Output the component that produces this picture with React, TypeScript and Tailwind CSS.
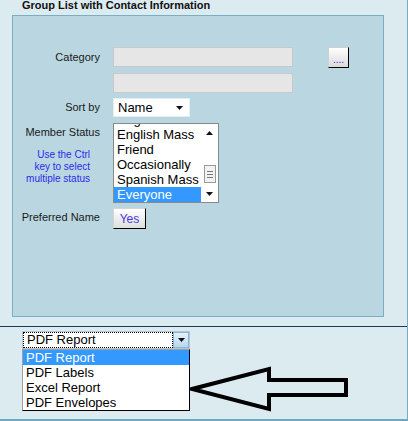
import React from "react";

const FONT = "font-['Liberation_Sans',Arial,sans-serif]";

const STATUS = ["Regular", "English Mass", "Friend", "Occasionally", "Spanish Mass", "Everyone"];
const REPORTS = ["PDF Report", "PDF Labels", "Excel Report", "PDF Envelopes"];

function Tri({ down = true, cls = "" }: { down?: boolean; cls?: string }) {
  return (
    <svg width="7" height="4" viewBox="0 0 7 4" className={cls}>
      {down ? <polygon points="0,0 7,0 3.5,4" fill="#111" /> : <polygon points="0,4 7,4 3.5,0" fill="#111" />}
    </svg>
  );
}

function Label({ children }: { children: React.ReactNode }) {
  return <div className="w-[87px] shrink-0 text-right text-[11px] leading-[13px] text-[#1a1a1a]">{children}</div>;
}

export default function App() {
  return (
    <div className={`${FONT} w-[408px] h-[421px] overflow-hidden flex flex-col bg-[#dcebf0] border-r border-r-[#76adc2] border-b-2 border-b-[#6ea8bd]`}>
      <div className="h-[15px] shrink-0 pl-[22px] text-[11px] leading-[11px] font-bold text-[#111]">
        Group List with Contact Information
      </div>

      {/* criteria panel */}
      <div className="ml-[12px] w-[372px] h-[302px] shrink-0 bg-[#bad6e0] border border-[#78afc4] pt-[31px]">
        <div className="flex items-start">
          <div className="pt-[4px]"><Label>Category</Label></div>
          <div className="ml-[13px] w-[180px] h-[20px] bg-[#e6e6e6] border border-[#c9c9c9]" />
          <button className="ml-[35px] w-[21px] h-[21px] flex items-end justify-center pb-[2px] bg-gradient-to-b from-white to-[#dadada] border border-[#d0d0d0] border-r-black border-b-black text-[10px] leading-[10px] text-[#2a2ae0]">
            ....
          </button>
        </div>

        <div className="ml-[100px] mt-[5px] w-[180px] h-[20px] bg-[#e6e6e6] border border-[#c9c9c9]" />

        <div className="flex items-center mt-[5px]">
          <Label>Sort by</Label>
          <div className="ml-[13px] w-[77px] h-[19px] bg-white border border-[#e4eef2] flex items-center pl-[4px] pr-[6px] text-[13px] leading-[15px] text-black">
            <span className="flex-1">Name</span>
            <Tri />
          </div>
        </div>

        <div className="flex items-start mt-[6px]">
          <div className="w-[87px] shrink-0 flex flex-col items-end pt-[3px]">
            <Label>Member Status</Label>
            <div className="mt-[10px] pr-[10px] text-right text-[10px] leading-[12px] text-[#2b2bef]">
              Use the Ctrl
              <br />
              key to select
              <br />
              multiple status
            </div>
          </div>
          <div className="ml-[13px] w-[106px] h-[80px] bg-white border border-[#8a8a8a] flex">
            <div className="flex-1 overflow-hidden flex flex-col justify-end text-[13px] leading-[15px] text-black">
              {STATUS.map((s) => (
                <div key={s} className={`shrink-0 h-[15px] pl-[3px] ${s === "Everyone" ? "bg-[#3399ff] text-white" : ""}`}>
                  {s}
                </div>
              ))}
            </div>
            <div className="w-[17px] flex flex-col bg-white">
              <div className="h-[17px] flex items-center justify-center"><Tri down={false} /></div>
              <div className="flex-1">
                <div className="mt-[24px] mx-auto w-[12px] h-[18px] bg-[#f2f2f2] border border-[#9a9a9a] flex flex-col items-center justify-center gap-[2px]">
                  <div className="w-[6px] h-px bg-[#777]" />
                  <div className="w-[6px] h-px bg-[#777]" />
                  <div className="w-[6px] h-px bg-[#777]" />
                </div>
              </div>
              <div className="h-[17px] flex items-center justify-center"><Tri /></div>
            </div>
          </div>
        </div>

        <div className="flex items-start mt-[5px]">
          <div className="pt-[3px]"><Label>Preferred Name</Label></div>
          <button className="ml-[13px] w-[33px] h-[21px] bg-gradient-to-b from-white to-[#dedede] border border-[#d4d4d4] border-r-black border-b-black text-[12px] leading-[14px] text-[#4b38dc]">
            Yes
          </button>
        </div>
      </div>

      <div className="mt-[9px] h-px w-full shrink-0 bg-[#1b3a5b]" />

      {/* output type */}
      <div className="ml-[22px] mt-[4px] w-[168px] h-[18px] flex border border-[#b4c6d0] bg-white">
        <div className="flex-1 border border-dotted border-black text-[13px] leading-[14px] pl-[3px] text-black">PDF Report</div>
        <div className="w-[16px] flex items-center justify-center bg-gradient-to-b from-[#e4f2fb] to-[#b7d7ee] border border-[#8db5d3]">
          <Tri />
        </div>
      </div>
      <div className="flex items-start">
        <div className="ml-[22px] w-[168px] h-[62px] bg-white border border-[#a0a0a0] border-r-black border-b-black text-[13px] leading-[15px] text-black">
          {REPORTS.map((r, i) => (
            <div key={r} className={`h-[15px] pl-[3px] ${i === 0 ? "bg-[#3399ff] text-white" : ""}`}>
              {r}
            </div>
          ))}
        </div>
        <svg width="170" height="64" viewBox="0 0 170 64" className="shrink-0">
          <polygon
            points="2,40 79,20 79,31 156,31 156,46 79,46 79,60"
            fill="none"
            stroke="#000"
            strokeWidth="4"
            strokeLinejoin="miter"
          />
        </svg>
      </div>
    </div>
  );
}
